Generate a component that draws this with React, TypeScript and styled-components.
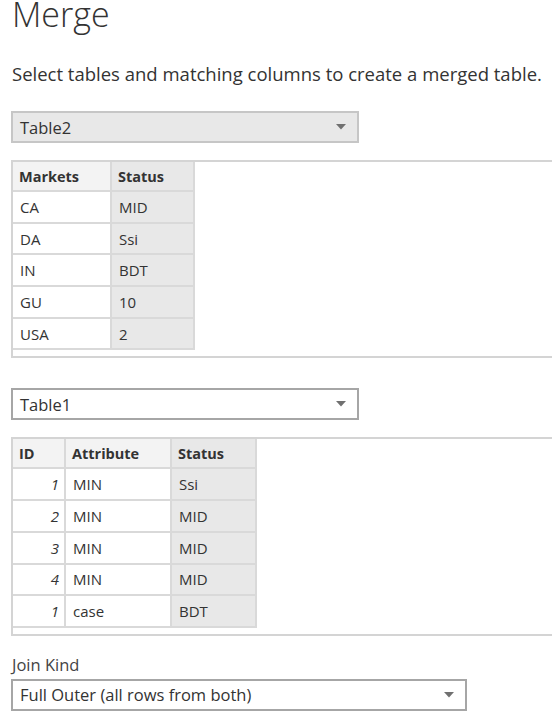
import React from "react";
import styled, { createGlobalStyle } from "styled-components";

const GlobalStyle = createGlobalStyle`
    html, body {
        margin: 0;
        padding: 0;
        background: #ffffff;
        overflow: hidden;
    }
    body {
        font-family: "Open Sans", "Noto Sans", sans-serif;
        color: #333333;
    }
`;

type Column = { name: string; width: number; shaded?: boolean; align?: "left" | "right" };

const marketsColumns: Column[] = [
    { name: "Markets", width: 99 },
    { name: "Status", width: 83, shaded: true },
];

const marketsRows = [
    ["CA", "MID"],
    ["DA", "Ssi"],
    ["IN", "BDT"],
    ["GU", "10"],
    ["USA", "2"],
];

const attributeColumns: Column[] = [
    { name: "ID", width: 53, align: "right" },
    { name: "Attribute", width: 106 },
    { name: "Status", width: 85, shaded: true },
];

const attributeRows = [
    ["1", "MIN", "Ssi"],
    ["2", "MIN", "MID"],
    ["3", "MIN", "MID"],
    ["4", "MIN", "MID"],
    ["1", "case", "BDT"],
];

function Arrow() {
    return (
        <svg width="10" height="6" viewBox="0 0 10 6">
            <path d="M0 0 H10 L5 5.5 Z" fill="#707070" />
        </svg>
    );
}

function Preview({ columns, rows }: { columns: Column[]; rows: string[][] }) {
    return (
        <PreviewFrame>
            <Grid>
                <thead>
                    <tr>
                        {columns.map((col, idx) => (
                            <HeadCell key={idx} $shaded={col.shaded} style={{ width: col.width }}>
                                {col.name}
                            </HeadCell>
                        ))}
                    </tr>
                </thead>
                <tbody>
                    {rows.map((row, rIdx) => (
                        <tr key={rIdx}>
                            {row.map((value, cIdx) => (
                                <BodyCell
                                    key={cIdx}
                                    $shaded={columns[cIdx].shaded}
                                    $numeric={columns[cIdx].align === "right"}
                                >
                                    {value}
                                </BodyCell>
                            ))}
                        </tr>
                    ))}
                </tbody>
            </Grid>
        </PreviewFrame>
    );
}

export default function App() {
    return (
        <>
            <GlobalStyle />
            <Page>
                <Title>Merge</Title>
                <Subtitle>Select tables and matching columns to create a merged table.</Subtitle>

                <Select $tone="disabled" $width={348} $gap={25}>
                    <span>Table2</span>
                    <Arrow />
                </Select>
                <Preview columns={marketsColumns} rows={marketsRows} />

                <Select $tone="open" $width={348} $gap={30}>
                    <span>Table1</span>
                    <Arrow />
                </Select>
                <Preview columns={attributeColumns} rows={attributeRows} />

                <FieldLabel>Join Kind</FieldLabel>
                <Select $tone="open" $width={456} $gap={3}>
                    <span>Full Outer (all rows from both)</span>
                    <Arrow />
                </Select>
            </Page>
        </>
    );
}

const Page = styled.div`
    display: flex;
    flex-direction: column;
    align-items: flex-start;
    padding-left: 11px;
`;

const Title = styled.h1`
    margin: -2px 0 0 1px;
    font-size: 34px;
    line-height: 33px;
    font-weight: 300;
    color: #333333;
`;

const Subtitle = styled.p`
    margin: 30px 0 0 1px;
    font-size: 18.5px;
    line-height: 25px;
    color: #333333;
`;

const Select = styled.div<{ $tone: "disabled" | "open"; $width: number; $gap: number }>`
    box-sizing: border-box;
    display: flex;
    align-items: center;
    justify-content: space-between;
    width: ${(p) => p.$width}px;
    height: 32px;
    margin-top: ${(p) => p.$gap}px;
    padding: 0 11px 0 7px;
    border: 2px solid ${(p) => (p.$tone === "disabled" ? "#c6c6c6" : "#a6a6a6")};
    background: ${(p) => (p.$tone === "disabled" ? "#e8e8e8" : "#ffffff")};
    font-size: 16.5px;
    color: #333333;
`;

const PreviewFrame = styled.div`
    box-sizing: border-box;
    align-self: stretch;
    margin: 17px -20px 0 0;
    padding-bottom: 6px;
    border: 2px solid #d4d4d4;
    border-right: none;
`;

const Grid = styled.table`
    border-collapse: separate;
    border-spacing: 0;
    table-layout: fixed;
    font-size: 15px;
`;

const HeadCell = styled.th<{ $shaded?: boolean }>`
    box-sizing: border-box;
    height: 30px;
    padding: 0 6px;
    text-align: left;
    font-weight: 700;
    font-size: 14.5px;
    color: #333333;
    background: ${(p) => (p.$shaded ? "#e8e8e8" : "#f3f3f3")};
    border-right: 2px solid #d9d9d9;
    border-bottom: 2px solid #d9d9d9;
`;

const BodyCell = styled.td<{ $shaded?: boolean; $numeric?: boolean }>`
    box-sizing: border-box;
    height: 31.7px;
    padding: 0 ${(p) => (p.$numeric ? "5px" : "6px")} 0 7px;
    text-align: ${(p) => (p.$numeric ? "right" : "left")};
    font-style: ${(p) => (p.$numeric ? "italic" : "normal")};
    color: #333333;
    background: ${(p) => (p.$shaded ? "#e8e8e8" : "#ffffff")};
    border-right: 2px solid #d9d9d9;
    border-bottom: 2px solid #d9d9d9;
`;

const FieldLabel = styled.div`
    margin: 18px 0 0 1px;
    font-size: 16.5px;
    line-height: 22px;
    color: #444444;
`;
